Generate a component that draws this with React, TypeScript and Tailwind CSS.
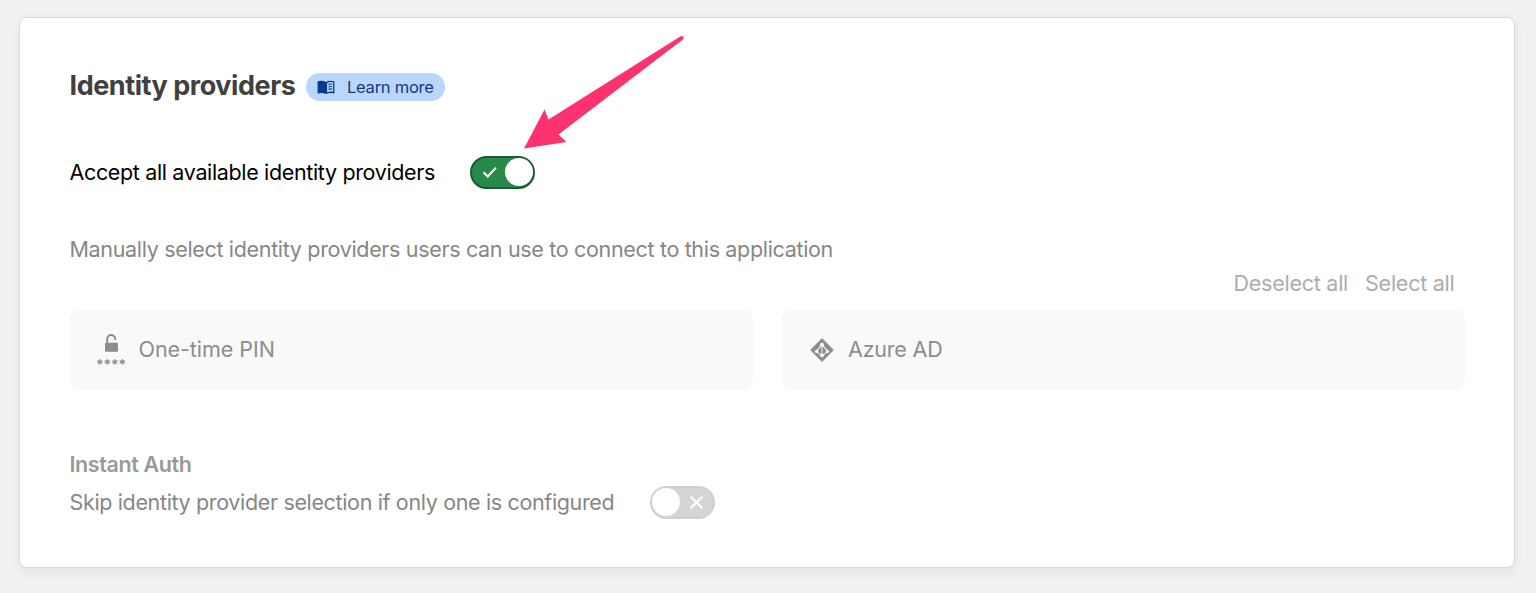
import { clsx } from 'clsx';

function BookIcon() {
  return (
    <svg width="18" height="15" viewBox="0 0 18 15" fill="#083b8c">
      <path d="M0.600 1.300C3.400 .4 6.400 .5 9 2v12c-2.600-1.200-5.600-1.200-8.400-.4z" />
      <path d="M9 2c2.500-1.500 5.500-1.600 8.400-.7v12.300C14.600 12.800 11.600 12.800 9 14zM10.100 2.900v9.300c2-.7 4-.8 6-.4V2.300c-2-.4-4-.3-6 .6z" fillRule="evenodd" />
      <path d="M11.300 4.500q1.800-.6 3.700-.4M11.300 6.900q1.800-.6 3.700-.4M11.300 9.300q1.800-.6 3.700-.4" fill="none" stroke="#083b8c" strokeWidth="1.100" />
    </svg>
  );
}

function LockIcon() {
  return (
    <svg width="15" height="19" viewBox="0 0 15 19">
      <path d="M3.200 10V5.200a4 4 0 0 1 8-.5v1.200" fill="none" stroke="#8c8c8c" strokeWidth="1.900" />
      <rect x="1" y="8.800" width="13" height="8.900" rx="0.800" fill="#8c8c8c" />
    </svg>
  );
}

function AzureIcon() {
  return (
    <svg width="26" height="26" viewBox="0 0 26 26">
      <path d="M13 1.600 24.300 13 13 24.400 1.700 13z" fill="#8c8c8c" stroke="#8c8c8c" strokeLinejoin="round" />
      <path d="M13 7.300 7.300 14.600 13 18.600 18.700 14.600z" fill="none" stroke="#f9f9f9" strokeWidth="1.100" />
      <path d="M13 7.500V18.500" stroke="#f9f9f9" strokeWidth="0.900" />
      <g fill="#f9f9f9">
        <circle cx="13" cy="7.700" r="2" />
        <circle cx="7.600" cy="14.400" r="1.700" />
        <circle cx="18.400" cy="14.400" r="1.700" />
        <circle cx="13" cy="18.400" r="1.900" />
      </g>
    </svg>
  );
}

function Toggle({ on }: { on?: boolean }) {
  return (
    <button
      role="switch"
      aria-checked={!!on}
      className={clsx(
        'flex h-[33px] w-[65.5px] items-center justify-between rounded-full border-2',
        on ? 'flex-row border-[#1c5a34] bg-[#27894a] pl-[10px]' : 'flex-row-reverse border-[#cfcfcf] bg-[#d5d5d5] pr-[9.5px]'
      )}
    >
      {on ? (
        <svg width="16" height="14" viewBox="0 0 16 14" fill="none" stroke="white" strokeWidth="2">
          <path d="M1.500 7.300 5.700 11.500 14 2.600" />
        </svg>
      ) : (
        <svg width="15" height="15" viewBox="0 0 15 15" fill="none" stroke="white" strokeWidth="2.200">
          <path d="M1.700 1.700 13.300 13.300M13.300 1.700 1.700 13.300" />
        </svg>
      )}
      <span className="size-[28px] rounded-full bg-white" />
    </button>
  );
}

export default function App() {
  return (
    <div className="h-[593px] w-[1536px] bg-[#f1f1f1] px-[19px] pt-[17px] font-['Inter',sans-serif] text-[21.5px] tracking-[-0.35px] whitespace-nowrap">
      <div className="h-[551px] w-[1496px] rounded-lg border border-[#d9dadc] bg-white px-[49.5px] pt-[49px] shadow-[0_4px_12px_rgba(0,0,40,0.06)]">
        <div className="flex h-[38px] items-center">
          <h2 className="w-[226px] text-[27px] font-bold tracking-[-0.45px] text-[#404041]">Identity providers</h2>
          <a className="mt-[2px] ml-[10.5px] flex h-[28px] w-[138.5px] items-center rounded-full bg-[#b9d6ff] pl-[11px] text-[16.5px] tracking-[-0.25px] text-[#12397c]">
            <BookIcon />
            <span className="mt-px ml-3">Learn more</span>
          </a>
        </div>

        <div className="mt-[50px] flex h-[34px] items-center text-black">
          <span className="w-[400px]">Accept all available identity providers</span>
          <Toggle on />
        </div>

        <p className="mt-[45px] h-[30px] leading-[30px] tracking-[-0.33px] text-[#868686]">
          Manually select identity providers users can use to connect to this application
        </p>

        <div className="mt-1 flex h-[30px] items-center justify-end gap-[17px] pr-[10px] tracking-[-0.25px] text-[#acacac]">
          <a>Deselect all</a>
          <a>Select all</a>
        </div>

        <div className="mt-[11px] grid h-[81px] grid-cols-2 gap-[29px] text-[#8c8c8c]">
          <div className="flex items-center rounded-[10px] bg-[#f9f9f9] pl-[26.5px]">
            <div className="flex w-[30px] flex-col items-center">
              <LockIcon />
              <span className="h-[13px] text-[14px] leading-[23px] font-semibold tracking-[-0.1px]">****</span>
            </div>
            <span className="ml-[12.5px] tracking-[-0.05px]">One-time PIN</span>
          </div>
          <div className="flex items-center rounded-[10px] bg-[#f9f9f9] pl-[27px]">
            <AzureIcon />
            <span className="ml-[13.5px] tracking-[-0.2px]">Azure AD</span>
          </div>
        </div>

        <h3 className="mt-[59px] h-[30px] leading-[30px] font-semibold tracking-[-0.4px] text-[#999999]">Instant Auth</h3>
        <div className="mt-[6px] flex h-[34px] items-center text-[#868686]">
          <span className="w-[580px]">Skip identity provider selection if only one is configured</span>
          <Toggle />
        </div>
      </div>

      {/* pointer to the toggle */}
      <svg className="absolute top-0 left-0" width="720" height="200" viewBox="0 0 720 200">
        <path d="M681 36Q684 36 683.500 39L558.500 134.500 566.500 142 524 148.500 544.500 109.500 548.500 119.500Z" fill="#fd326f" />
      </svg>
    </div>
  );
}
